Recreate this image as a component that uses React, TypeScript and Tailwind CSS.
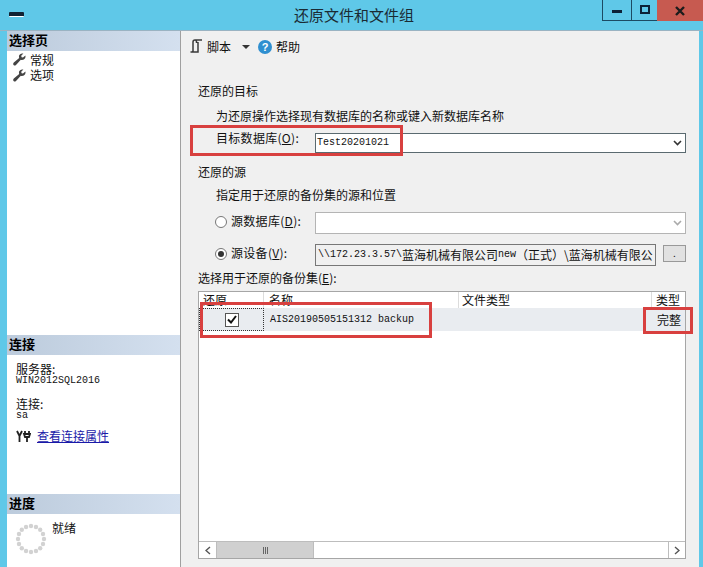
import React from "react";

const cjk = "font-['Noto_Sans_CJK_SC','Liberation_Sans',sans-serif]";
const mono = "font-['Liberation_Mono','Noto_Sans_CJK_SC',monospace]";

function Wrench() {
  return (
    <svg width="13" height="13" viewBox="0 0 13 13" className="shrink-0">
      <path d="M12.4 2.6 L10 4.6 L8.6 4.2 L8.2 2.8 L10.4.6 C8.4 0 6.4 1 6 2.8 C5.8 3.6 6 4.4 6.2 5 L.8 9.6 C0 10.4 0 11.4.6 12 C1.2 12.8 2.2 12.6 3 12 L7.8 6.8 C9.6 7.4 11.4 6.6 12.2 5 C12.6 4.2 12.6 3.4 12.4 2.6 Z" fill="#444" />
    </svg>
  );
}

function SectionHead({ children }: { children: React.ReactNode }) {
  return (
    <div className="h-5 shrink-0 pl-[2px] pb-[3px] flex items-center text-[13px] font-bold leading-none text-black bg-gradient-to-r from-[#bccbdc] to-[#d4e0ef]">
      {children}
    </div>
  );
}

function Chevron({ color }: { color: string }) {
  return (
    <svg width="9" height="6" viewBox="0 0 9 6">
      <path d="M1 1 L4.5 4.5 L8 1" fill="none" stroke={color} strokeWidth="1.6" />
    </svg>
  );
}

function Spinner() {
  const dots = Array.from({ length: 16 }, (_, i) => (i * Math.PI * 2) / 16);
  return (
    <svg width="32" height="32" viewBox="0 0 32 32" className="shrink-0">
      {dots.map((a, i) => (
        <circle key={i} cx={16 + 13 * Math.cos(a)} cy={16 + 13 * Math.sin(a)} r="2.2" fill="#d2d2d2" />
      ))}
    </svg>
  );
}

export default function App() {
  return (
    <div className={`relative w-[703px] h-[567px] overflow-hidden bg-[#5fc8e8] text-[12px] text-[#111] ${cjk} flex flex-col`}>
      {/* title bar */}
      <div className="relative h-[30px] shrink-0 flex items-start">
        <div className="ml-[9px] mt-[12px] w-[15px] h-[5px] rounded-[1px] bg-[#123] border-b border-white" />
        <div className="absolute left-[294px] top-[5px] text-[15px] leading-[20px] text-[#1a2a33]">还原文件和文件组</div>
        <div className="ml-auto flex h-[21px]">
          <div className="w-[29px] border-l border-b border-[#1c4a63] flex items-center justify-center">
            <div className="w-[10px] h-[3px] bg-[#0c2238] mt-[3px]" />
          </div>
          <div className="w-[26px] border-l border-b border-[#1c4a63] flex items-center justify-center">
            <div className="w-[10px] h-[9px] border-2 border-[#0c2238] -mt-[2px]" />
          </div>
          <div className="w-[46px] bg-[#c75a50] flex items-center justify-center text-[14px] font-bold leading-none text-[#1a1a1a]">
            <svg width="10" height="10" viewBox="0 0 10 10">
              <path d="M1 1 L9 9 M9 1 L1 9" stroke="#1c1c1c" strokeWidth="2.4" />
            </svg>
          </div>
        </div>
      </div>
      <div className="h-px shrink-0 bg-[#9ab3c2]" />

      {/* body */}
      <div className="flex-1 flex ml-[7px] mr-[4px] min-h-0">
        {/* sidebar */}
        <div className="w-[174px] shrink-0 bg-white border-r border-[#a0a0a0] flex flex-col">
          <div className="h-[304px] shrink-0">
            <SectionHead>选择页</SectionHead>
            <div className="flex items-center gap-[4px] pl-[6px] h-[15px] mt-px leading-none">
              <Wrench />
              <span>常规</span>
            </div>
            <div className="flex items-center gap-[4px] pl-[6px] h-[16px] leading-none">
              <Wrench />
              <span>选项</span>
            </div>
          </div>
          <div className="h-[159px] shrink-0">
            <SectionHead>连接</SectionHead>
            <div className="pl-[9px] pt-[7px]">
              <div className="leading-[13px] h-[13px]">服务器:</div>
              <div className={`${mono} text-[10px] leading-[12px] h-[12px] mb-[10px]`}>WIN2012SQL2016</div>
              <div className="leading-[13px] h-[13px]">连接:</div>
              <div className={`${mono} text-[10px] leading-[12px] h-[12px]`}>sa</div>
              <div className="flex items-center gap-[6px] mt-[6px] h-[16px]">
                <svg width="15" height="13" viewBox="0 0 15 13" className="shrink-0">
                  <path d="M1 1 L3.5 6 L6 1 M3.5 6 V12 M9 1 V4 M13 1 V4 M8 4 H14 L13 7 H9 Z M11 7 V12" fill="none" stroke="#222" strokeWidth="1.8" />
                </svg>
                <span className="text-[#1a1aa8] underline leading-none">查看连接属性</span>
              </div>
            </div>
          </div>
          <div className="flex-1">
            <SectionHead>进度</SectionHead>
            <div className="flex pl-[8px] pt-[7px] gap-[5px]">
              <div className="mt-[2px]"><Spinner /></div>
              <span className="leading-[14px]">就绪</span>
            </div>
          </div>
        </div>

        {/* main */}
        <div className="flex-1 bg-[#f0f0f0] pl-[17px] pr-[13px] flex flex-col min-w-0">
          {/* toolbar */}
          <div className="h-[32px] -ml-[9px] flex items-center shrink-0 pb-[1px]">
            <svg width="15" height="15" viewBox="0 0 15 15" className="shrink-0">
              <path d="M4 12 V3 C4 1.5 5 1 6 1 H13 M6 1 C7 1 7.5 2 7.5 3 V4 M9 3 V13 H1.5 C3 13 4 12.5 4 12" fill="none" stroke="#3a3a3a" strokeWidth="1.5" />
            </svg>
            <span className="ml-[3px]">脚本</span>
            <svg width="8" height="4" viewBox="0 0 8 4" className="ml-[11px]"><path d="M0 0 H8 L4 4 Z" fill="#333" /></svg>
            <div className="ml-[8px] w-[14px] h-[14px] rounded-full bg-[#2f8fd0] text-white text-[11px] font-bold leading-[14px] text-center font-['Liberation_Sans',sans-serif]">?</div>
            <span className="ml-[4px]">帮助</span>
          </div>

          <div className="h-[20px] mt-[18px] leading-[20px] shrink-0">还原的目标</div>
          <div className="h-[20px] mt-[5px] pl-[18px] leading-[20px] shrink-0">为还原操作选择现有数据库的名称或键入新数据库名称</div>

          <div className="flex items-center mt-[7px] h-[20px] pl-[18px] shrink-0">
            <span className="w-[99px] shrink-0 -mt-[10px] leading-none tracking-[0.3px]">目标数据库(<span className="underline">O</span>):</span>
            <div className="flex-1 h-[20px] bg-white border border-[#5a6a70] flex items-center justify-between pl-[1px] pr-[3px]">
              <span className={`${mono} text-[10px] leading-none`}>Test20201021</span>
              <Chevron color="#333" />
            </div>
          </div>

          <div className="h-[20px] mt-[9px] leading-[20px] shrink-0">还原的源</div>
          <div className="h-[20px] mt-[3px] pl-[18px] leading-[20px] shrink-0">指定用于还原的备份集的源和位置</div>

          <div className="flex items-center mt-[7px] h-[22px] pl-[17px] shrink-0">
            <span className="w-[12px] h-[12px] rounded-full bg-white border border-[#777] shrink-0 -mt-[2px]" />
            <span className="w-[88px] shrink-0 pl-[4px] leading-none -mt-[4px] tracking-[0.3px]">源数据库(<span className="underline">D</span>):</span>
            <div className="flex-1 h-[22px] bg-white border border-[#b4b4b4] flex items-center justify-end pr-[3px]">
              <Chevron color="#aaa" />
            </div>
          </div>

          <div className="flex items-center mt-[10px] h-[22px] pl-[17px] shrink-0">
            <span className="w-[12px] h-[12px] rounded-full bg-white border border-[#777] shrink-0 -mt-[2px] flex items-center justify-center">
              <span className="w-[6px] h-[6px] rounded-full bg-[#333]" />
            </span>
            <span className="w-[88px] shrink-0 pl-[4px] leading-none -mt-[4px] tracking-[0.3px]">源设备(<span className="underline">V</span>):</span>
            <div className="w-[341px] shrink-0 h-[22px] bg-[#f0f0f0] border border-[#777] flex items-center overflow-hidden whitespace-nowrap pl-[2px] leading-none">
              <span className={`${mono} text-[10px]`}>\\172.23.3.57\</span>
              <span>蓝海机械有限公司</span>
              <span className={`${mono} text-[10px]`}>new</span>
              <span>（正式）\蓝海机械有限公</span>
            </div>
            <div className="ml-[7px] w-[23px] h-[17px] -mt-[3px] bg-[#e1e1e1] border border-[#999] text-center leading-[14px] text-[10px] shrink-0">.</div>
          </div>

          <div className="h-[18px] mt-[3px] leading-[18px] shrink-0">选择用于还原的备份集(<span className="underline">E</span>):</div>

          {/* table */}
          <div className="mt-[4px] h-[268px] bg-white border border-[#a6a6a6] flex flex-col shrink-0">
            <div className="h-[16px] shrink-0 flex leading-[16px] overflow-hidden">
              <div className="w-[65px] pl-[4px] border-r border-[#dcdcdc]">还原</div>
              <div className="w-[195px] pl-[5px] border-r border-[#dcdcdc]">名称</div>
              <div className="w-[193px] pl-[3px] border-r border-[#dcdcdc]">文件类型</div>
              <div className="flex-1 pl-[4px]">类型</div>
            </div>
            <div className="h-[23px] shrink-0 flex items-center bg-[#e9ecf0]">
              <div className="w-[65px] h-full border border-dotted border-[#333] flex items-center justify-center">
                <div className="w-[14px] h-[14px] bg-white border border-[#555] flex items-center justify-center">
                  <svg width="10" height="9" viewBox="0 0 10 9"><path d="M1 4.5 L4 7.5 L9 1" fill="none" stroke="#111" strokeWidth="2" /></svg>
                </div>
              </div>
              <div className={`w-[388px] pl-[6px] ${mono} text-[10px] leading-none`}>AIS20190505151312 backup</div>
              <div className="flex-1 pl-[5px] leading-none">完整</div>
            </div>
            <div className="flex-1" />
            <div className="h-[17px] shrink-0 flex items-stretch border-t border-[#bdbdbd]">
              <div className="w-[17px] flex items-center justify-center">
                <svg width="6" height="9" viewBox="0 0 6 9"><path d="M5 1 L1 4.5 L5 8" fill="none" stroke="#555" strokeWidth="1.4" /></svg>
              </div>
              <div className="w-[98px] bg-[#d0d0d0] border-x border-[#bdbdbd] flex items-center justify-center gap-px">
                <span className="w-px h-[7px] bg-[#666]" />
                <span className="w-px h-[7px] bg-[#666]" />
                <span className="w-px h-[7px] bg-[#666]" />
              </div>
              <div className="flex-1" />
              <div className="w-[17px] border-l border-[#bdbdbd] flex items-center justify-center">
                <svg width="6" height="9" viewBox="0 0 6 9"><path d="M1 1 L5 4.5 L1 8" fill="none" stroke="#555" strokeWidth="1.4" /></svg>
              </div>
            </div>
          </div>
        </div>
      </div>

      {/* red annotation rectangles */}
      <div className="absolute left-[190px] top-[125px] w-[213px] h-[31px] border-[3px] border-[#d8403f]" />
      <div className="absolute left-[200px] top-[302px] w-[232px] h-[36px] border-[3px] border-[#d8403f]" />
      <div className="absolute left-[643px] top-[307px] w-[50px] h-[27px] border-[3px] border-[#d8403f]" />
    </div>
  );
}
